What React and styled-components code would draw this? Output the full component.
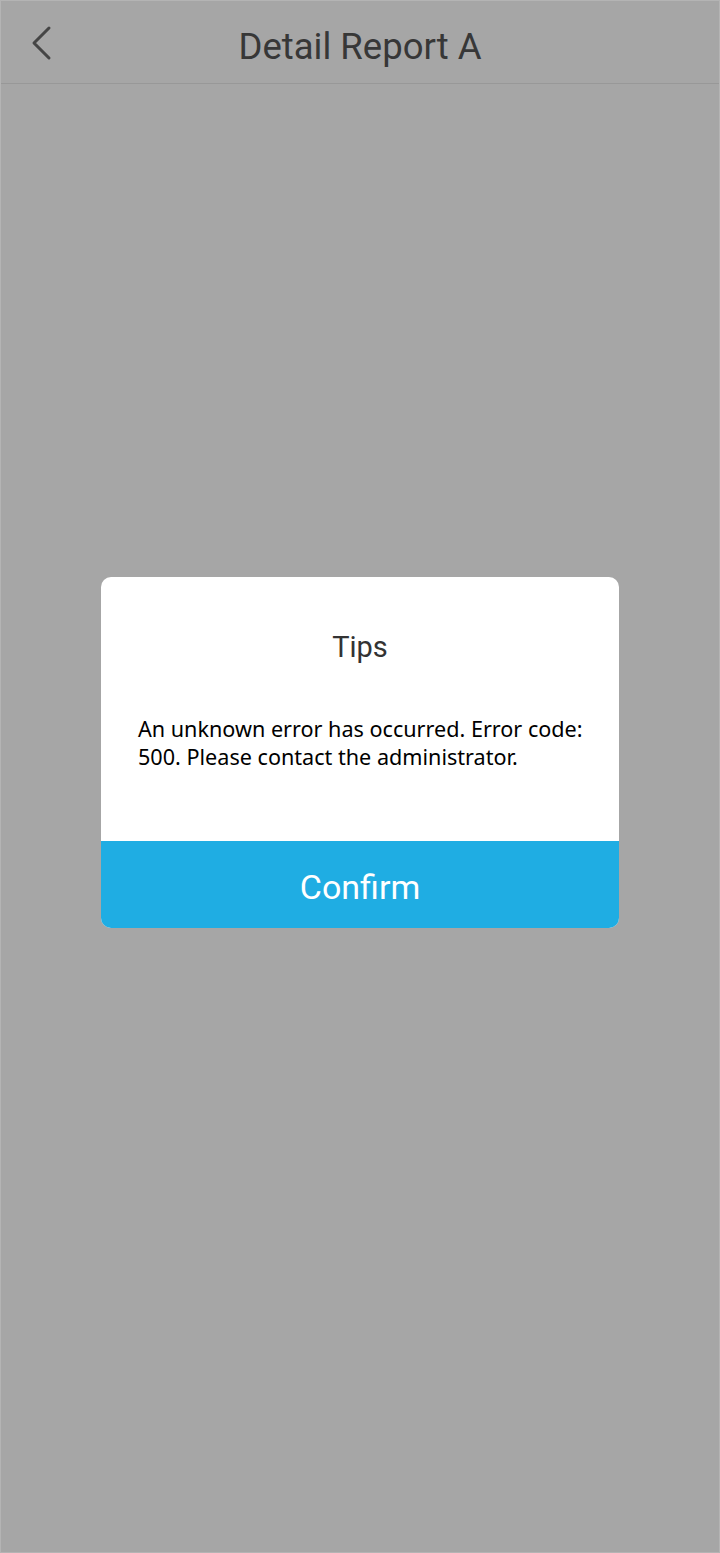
import React from "react";
import styled, { createGlobalStyle } from "styled-components";

const Global = createGlobalStyle`
  html, body { margin: 0; padding: 0; }
  body { background: #a6a6a6; font-family: Roboto, "Liberation Sans", sans-serif; }
`;

const Screen = styled.div`
  position: relative;
  width: 720px;
  height: 1553px;
  box-sizing: border-box;
  border: 1px solid #b4b4b4;
  background: #a6a6a6;
  display: flex;
  flex-direction: column;
  overflow: hidden;
`;

const Header = styled.header`
  height: 82px;
  flex: none;
  display: flex;
  align-items: center;
  justify-content: center;
  position: relative;
  border-bottom: 1px solid #989898;
`;

const BackButton = styled.button`
  position: absolute;
  left: 26px;
  top: 22px;
  width: 30px;
  height: 40px;
  padding: 0;
  border: 0;
  background: transparent;
  display: flex;
  align-items: center;
  justify-content: center;
`;

const Title = styled.h1`
  margin: 0;
  font-family: Roboto, "Liberation Sans", sans-serif;
  font-weight: 400;
  font-size: 36.5px;
  line-height: 40px;
  color: #373737;
  margin-top: 10px;
`;

const Body = styled.main`
  flex: 1;
  display: flex;
  align-items: flex-start;
  justify-content: center;
  padding-top: 493px;
`;

const Dialog = styled.div`
  width: 518px;
  background: #ffffff;
  border-radius: 10px;
  overflow: hidden;
  display: flex;
  flex-direction: column;
`;

const DialogTitle = styled.div`
  text-align: center;
  font-family: Roboto, "Liberation Sans", sans-serif;
  font-size: 29px;
  color: #333;
  padding-top: 55px;
  line-height: 30px;
`;

const Message = styled.p`
  margin: 0;
  padding: 53px 30px 70px 37px;
  font-family: "Noto Sans", "Open Sans", sans-serif;
  font-size: 21.6px;
  line-height: 28px;
  color: #000;
`;

const ConfirmButton = styled.button`
  height: 87px;
  border: 0;
  background: #1fade3;
  color: #ffffff;
  font-family: Roboto, "Liberation Sans", sans-serif;
  font-size: 34px;
  padding: 4px 0 0;
  cursor: pointer;
`;

export default function App() {
  return (
    <>
      <Global />
      <Screen>
        <Header>
          <BackButton aria-label="Back">
            <svg width="30" height="40" viewBox="0 0 30 40">
              <path d="M22 5 L7 20 L22 35" fill="none" stroke="#454545" strokeWidth="3" strokeLinecap="round" strokeLinejoin="round" />
            </svg>
          </BackButton>
          <Title>Detail Report A</Title>
        </Header>
        <Body>
          <Dialog>
            <DialogTitle>Tips</DialogTitle>
            <Message>An unknown error has occurred. Error code: 500. Please contact the administrator.</Message>
            <ConfirmButton>Confirm</ConfirmButton>
          </Dialog>
        </Body>
      </Screen>
    </>
  );
}
